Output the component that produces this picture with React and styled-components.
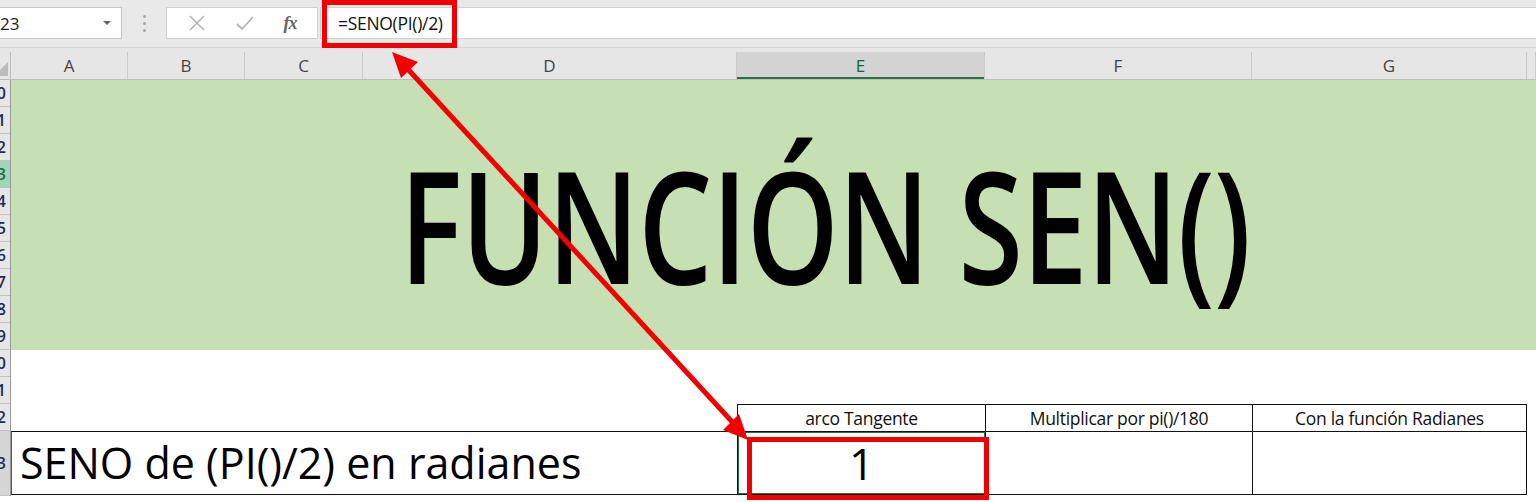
import React from 'react';
import styled, { createGlobalStyle } from 'styled-components';

const GlobalStyle = createGlobalStyle`
  html, body {
    margin: 0;
    padding: 0;
    background: #ffffff;
  }
  body {
    font-family: 'Open Sans', 'Noto Sans', sans-serif;
  }
`;

const COLS = '117px 117px 118px 374px 248px 267px 275px 9px';

const Page = styled.div`
  position: relative;
  width: 1536px;
  height: 502px;
  overflow: hidden;
  background: #ffffff;
`;

/* ---------- formula bar ---------- */

const FormulaBar = styled.div`
  height: 48px;
  background: #e9e9e9;
  display: flex;
  align-items: flex-start;
  padding-top: 7px;
  box-sizing: border-box;
  border-bottom: 1px solid #d4d4d4;
`;

const NameBox = styled.div`
  width: 122px;
  height: 32px;
  box-sizing: border-box;
  background: #ffffff;
  border: 1px solid #c6c6c6;
  border-left: none;
  display: flex;
  align-items: center;
  justify-content: space-between;
  padding-right: 10px;
  font-size: 17px;
  color: #222;
`;

const Caret = styled.span`
  width: 0;
  height: 0;
  border-left: 4px solid transparent;
  border-right: 4px solid transparent;
  border-top: 4px solid #666;
`;

const Grip = styled.div`
  width: 44px;
  height: 32px;
  display: flex;
  flex-direction: column;
  align-items: center;
  justify-content: center;
  gap: 4px;
  span {
    width: 3px;
    height: 3px;
    border-radius: 50%;
    background: #a6a6a6;
  }
`;

const IconBox = styled.div`
  width: 152px;
  height: 32px;
  box-sizing: border-box;
  background: #ffffff;
  border: 1px solid #d0d0d0;
  display: flex;
  align-items: center;
  justify-content: space-around;
  padding: 0 6px;
`;

const Fx = styled.span`
  font-family: 'Liberation Serif', serif;
  font-style: italic;
  font-weight: bold;
  font-size: 18px;
  color: #666;
  letter-spacing: -1px;
`;

const FormulaInput = styled.div`
  flex: 1;
  height: 32px;
  margin-left: 2px;
  box-sizing: border-box;
  background: #ffffff;
  border: 1px solid #d0d0d0;
  border-right: none;
  display: flex;
  align-items: center;
  padding-left: 17px;
  font-size: 17.5px;
  letter-spacing: -0.3px;
  color: #111;
`;

/* ---------- column headers ---------- */

const HeaderRow = styled.div`
  display: flex;
  height: 32px;
  background: #e6e6e6;
  border-bottom: 1px solid #bdbdbd;
  box-sizing: border-box;
  padding-top: 4px;
`;

const Corner = styled.div`
  width: 11px;
  position: relative;
  border-right: 1px solid #bdbdbd;
  box-sizing: border-box;
  &::after {
    content: '';
    position: absolute;
    right: 2px;
    bottom: 3px;
    border-left: 14px solid transparent;
    border-bottom: 14px solid #bcbcbc;
  }
`;

const ColHeads = styled.div`
  display: grid;
  grid-template-columns: ${COLS};
`;

const ColHead = styled.div`
  display: flex;
  align-items: center;
  justify-content: center;
  font-size: 17px;
  color: ${(p) => (p.$active ? '#1e5e3a' : '#444')};
  background: ${(p) => (p.$active ? '#d3d3d3' : 'transparent')};
  border-right: 1px solid #cacaca;
  box-sizing: border-box;
  box-shadow: ${(p) => (p.$active ? 'inset 0 -2px 0 #217346' : 'none')};
`;

/* ---------- body ---------- */

const Body = styled.div`
  display: flex;
`;

const RowHeads = styled.div`
  width: 11px;
  display: flex;
  flex-direction: column;
  border-right: 1px solid #9a9a9a;
  box-sizing: border-box;
`;

const RowHead = styled.div`
  height: ${(p) => p.$h}px;
  box-sizing: border-box;
  border-bottom: 1px solid #c2c2c2;
  background: ${(p) => (p.$sel ? '#9fd5bb' : p.$cur ? '#d6d6d6' : '#e6e6e6')};
  color: ${(p) => (p.$sel ? '#1e6b45' : '#1f2a55')};
  font-size: 16px;
  font-weight: 600;
  display: flex;
  align-items: center;
  justify-content: flex-end;
  padding-right: 4px;
  overflow: hidden;
  white-space: nowrap;
`;

const Sheet = styled.div`
  display: grid;
  grid-template-columns: ${COLS};
  grid-template-rows: repeat(13, 27px) 65px;
`;

const Banner = styled.div`
  grid-column: 1 / -1;
  grid-row: 1 / 11;
  background: #c6e0b4;
  display: flex;
  align-items: center;
  justify-content: center;
  padding-left: 102px;
  padding-top: 18px;
  box-sizing: border-box;
  overflow: hidden;
`;

const Title = styled.h1`
  margin: 0;
  font-family: 'Open Sans', sans-serif;
  font-weight: 600;
  font-size: 156px;
  line-height: 1;
  color: #000;
  white-space: nowrap;
  transform: scaleX(0.75);
  letter-spacing: -1px;
`;

const Spacer = styled.div`
  grid-column: ${(p) => p.$span};
`;

const HeadCell = styled.div`
  border: 1px solid #111;
  border-right: ${(p) => (p.$last ? '1px solid #111' : 'none')};
  border-bottom: none;
  display: flex;
  align-items: center;
  justify-content: center;
  font-size: 17.5px;
  letter-spacing: -0.3px;
  color: #111;
  box-sizing: border-box;
  white-space: nowrap;
`;

const LabelCell = styled.div`
  grid-column: 1 / 5;
  border-top: 1px solid #111;
  border-bottom: 1px solid #111;
  border-left: 1px solid #217346;
  display: flex;
  align-items: center;
  padding-left: 8px;
  padding-bottom: 2px;
  font-size: 43px;
  color: #000;
  white-space: nowrap;
  box-sizing: border-box;
  height: 64px;
`;

const ValueCell = styled.div`
  border: 1px solid #111;
  border-right: ${(p) => (p.$last ? '1px solid #111' : 'none')};
  box-shadow: ${(p) => (p.$sel ? 'inset 0 0 0 1px #217346' : 'none')};
  height: 64px;
  display: flex;
  align-items: center;
  justify-content: center;
  font-size: 44px;
  color: #000;
  box-sizing: border-box;
`;

/* ---------- annotations ---------- */

const Overlay = styled.svg`
  position: absolute;
  left: 0;
  top: 0;
  pointer-events: none;
`;

const rows = [
  { n: 10, h: 27 },
  { n: 11, h: 27 },
  { n: 12, h: 27 },
  { n: 13, h: 27, sel: true },
  { n: 14, h: 27 },
  { n: 15, h: 27 },
  { n: 16, h: 27 },
  { n: 17, h: 27 },
  { n: 18, h: 27 },
  { n: 19, h: 27 },
  { n: 20, h: 27 },
  { n: 21, h: 27 },
  { n: 22, h: 27 },
  { n: 23, h: 65, cur: true },
];

const cols = ['A', 'B', 'C', 'D', 'E', 'F', 'G', ''];

export default function App() {
  return (
    <Page>
      <GlobalStyle />
      <FormulaBar>
        <NameBox>
          <span>23</span>
          <Caret />
        </NameBox>
        <Grip>
          <span />
          <span />
          <span />
        </Grip>
        <IconBox>
          <svg width="18" height="18" viewBox="0 0 18 18">
            <path d="M2 2 L16 16 M16 2 L2 16" stroke="#b4b4b4" strokeWidth="1.6" fill="none" />
          </svg>
          <svg width="20" height="18" viewBox="0 0 20 18">
            <path d="M2 10 L7 15 L18 3" stroke="#b4b4b4" strokeWidth="1.8" fill="none" />
          </svg>
          <Fx>fx</Fx>
        </IconBox>
        <FormulaInput>=SENO(PI()/2)</FormulaInput>
      </FormulaBar>

      <HeaderRow>
        <Corner />
        <ColHeads>
          {cols.map((c, i) => (
            <ColHead key={i} $active={c === 'E'}>
              {c}
            </ColHead>
          ))}
        </ColHeads>
      </HeaderRow>

      <Body>
        <RowHeads>
          {rows.map((r) => (
            <RowHead key={r.n} $h={r.h} $sel={r.sel} $cur={r.cur}>
              {r.n}
            </RowHead>
          ))}
        </RowHeads>
        <Sheet>
          <Banner>
            <Title>FUNCIÓN SEN()</Title>
          </Banner>
          <Spacer $span="1 / -1" />
          <Spacer $span="1 / -1" />
          <Spacer $span="1 / 5" />
          <HeadCell>arco Tangente</HeadCell>
          <HeadCell>Multiplicar por pi()/180</HeadCell>
          <HeadCell $last>Con la función Radianes</HeadCell>
          <Spacer $span="8 / 9" />
          <LabelCell>SENO de (PI()/2) en radianes</LabelCell>
          <ValueCell $sel>1</ValueCell>
          <ValueCell />
          <ValueCell $last />
        </Sheet>
      </Body>

      <Overlay width="1536" height="502" viewBox="0 0 1536 502">
        <rect x="324.5" y="2.5" width="130" height="43" fill="none" stroke="#f20000" strokeWidth="5" />
        <rect x="749.5" y="439.5" width="237" height="58" fill="none" stroke="#f20000" strokeWidth="5" />
        <line x1="405" y1="66" x2="736" y2="426" stroke="#f20000" strokeWidth="5" />
        <polygon points="392,52 418,62 401,78" fill="#f20000" />
        <polygon points="748,440 723,430 739,414" fill="#f20000" />
      </Overlay>
    </Page>
  );
}
